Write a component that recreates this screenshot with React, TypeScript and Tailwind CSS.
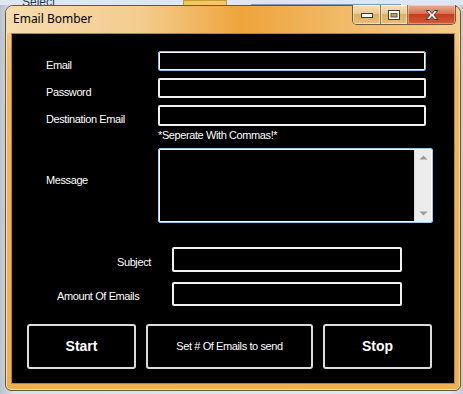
import React from "react";

const font = { fontFamily: '"Liberation Sans", Arial, sans-serif' };

const Box = ({ w, h, focus }: { w: string; h: string; focus?: boolean }) => (
  <div
    className={`${w} ${h} bg-black rounded-[2px] ${
      focus
        ? "border border-[#86b9e8] shadow-[inset_0_0_0_1px_#ffffff]"
        : "border-2 border-[#f2f2f2]"
    }`}
  />
);

const Label = ({ children, className = "" }: { children: React.ReactNode; className?: string }) => (
  <div className={`text-white text-[11px] leading-[13px] tracking-[-0.4px] whitespace-nowrap ${className}`}>
    {children}
  </div>
);

const CaptionButtons = () => (
  <div className="flex h-[20px] -mt-px mr-[4px] rounded-b-[5px] overflow-hidden border border-t-0 border-[#6e5a3c]">
    <div className="w-[28px] h-full flex items-center justify-center bg-[linear-gradient(#f8e2bd,#ecc98c_45%,#dcae62_50%,#e8c07a)] border-r border-[#8a7450] shadow-[inset_0_0_0_1px_rgba(255,255,255,0.5)]">
      <svg width="12" height="6" viewBox="0 0 12 6">
        <rect x="0.5" y="1.5" width="11" height="4" fill="#fff" stroke="#3b3b3b" />
      </svg>
    </div>
    <div className="w-[27px] h-full flex items-center justify-center bg-[linear-gradient(#f8e2bd,#ecc98c_45%,#dcae62_50%,#e8c07a)] border-r border-[#8a7450] shadow-[inset_0_0_0_1px_rgba(255,255,255,0.5)]">
      <svg width="12" height="10" viewBox="0 0 12 10">
        <rect x="0.5" y="0.5" width="11" height="9" fill="#fff" stroke="#3b3b3b" />
        <rect x="3" y="3.5" width="6" height="3.5" fill="#c79a55" stroke="#3b3b3b" strokeWidth="0.8" />
      </svg>
    </div>
    <div className="w-[47px] h-full flex items-center justify-center bg-[linear-gradient(#eab09c,#d9704f_45%,#c53d1c_50%,#d75a34)] shadow-[inset_0_0_0_1px_rgba(255,255,255,0.35)]">
      <svg width="14" height="12" viewBox="0 0 14 12">
        <path
          d="M1 1.5 L4.5 1.5 L7 4.5 L9.5 1.5 L13 1.5 L8.8 6 L13 10.5 L9.5 10.5 L7 7.5 L4.5 10.5 L1 10.5 L5.2 6 Z"
          fill="#fff"
          stroke="#3a3a3a"
          strokeWidth="1"
          strokeLinejoin="round"
        />
      </svg>
    </div>
  </div>
);

const ScrollArrow = ({ up }: { up?: boolean }) => (
  <svg width="9" height="5" viewBox="0 0 9 5">
    <path d={up ? "M0.5 4.5 L4.5 0.5 L8.5 4.5 Z" : "M0.5 0.5 L4.5 4.5 L8.5 0.5 Z"} fill="#9a9a9a" />
  </svg>
);

export default function App() {
  return (
    <div className="w-[463px] h-[394px] overflow-hidden bg-[linear-gradient(90deg,#b9c3ce,#d8e0ea_3%,#dfe7f1_97%,#c3ccd6)] flex flex-col" style={font}>
      {/* ribbon behind the window */}
      <div className="h-[5px] flex items-end bg-[#dde7f3] overflow-hidden">
        <div className="ml-[22px] text-[12px] leading-[12px] text-[#2b3b52] -mb-[3px]">Select</div>
        <div className="ml-[128px] w-[44px] h-[6px] bg-[#f3c85f] border border-[#c79a3a] -mb-px" />
        <div className="ml-[24px] w-[150px] h-[3px] border-b border-[#7b98c0]" />
      </div>

      <div className="ml-[5px] w-[456px] h-[386px] rounded-t-[8px] rounded-b-[6px] border border-[#6a5637] bg-[linear-gradient(#f4cf92,#efb75c_20%,#efb053)] flex flex-col shadow-[inset_0_0_0_1px_rgba(255,240,210,0.7)]">
        {/* title bar */}
        <div className="h-[27px] flex justify-between rounded-t-[7px] bg-[linear-gradient(90deg,#f7dcae,#f3cc8e_30%,#eea43a_52%,#f0b864_72%,#f5cc8c)]">
          <div
            className="pl-[7px] pt-[5px] text-[12px] leading-[16px] text-black"
            style={{ fontFamily: '"Noto Sans", "Open Sans", sans-serif' }}
          >
            Email Bomber
          </div>
          <CaptionButtons />
        </div>

        {/* client area */}
        <div className="mx-[5px] h-[351px] bg-black border border-[#b8833a] flex flex-col pt-[17px]">
          <div className="flex pl-[34px] h-[20px]">
            <Label className="w-[112px] pt-[8px]">Email</Label>
            <Box w="w-[268px]" h="h-[20px]" focus />
          </div>
          <div className="flex pl-[34px] h-[20px] mt-[7px]">
            <Label className="w-[112px] pt-[8px]">Password</Label>
            <Box w="w-[268px]" h="h-[20px]" />
          </div>
          <div className="flex pl-[34px] h-[21px] mt-[7px]">
            <Label className="w-[112px] pt-[8px]">Destination Email</Label>
            <Box w="w-[268px]" h="h-[21px]" />
          </div>
          <Label className="pl-[146px] mt-[3px]">*Seperate With Commas!*</Label>
          <div className="flex pl-[34px] mt-[6px]">
            <Label className="w-[112px] pt-[26px]">Message</Label>
            <div className="w-[275px] h-[75px] bg-black border border-[#9cc6ea] shadow-[inset_0_0_0_1px_#ffffff] p-px flex justify-end rounded-[2px]">
              <div className="w-[17px] h-full bg-[#ececec] border-l border-[#dcdcdc] flex flex-col items-center justify-between py-[5px]">
                <ScrollArrow up />
                <ScrollArrow />
              </div>
            </div>
          </div>

          <div className="flex mt-[24px]">
            <Label className="w-[160px] pl-[105px] pt-[9px]">Subject</Label>
            <Box w="w-[230px]" h="h-[25px]" />
          </div>
          <div className="flex mt-[10px]">
            <Label className="w-[160px] pl-[45px] pt-[8px]">Amount Of Emails</Label>
            <Box w="w-[230px]" h="h-[24px]" />
          </div>

          <div className="flex gap-[10px] pl-[15px] mt-[18px]">
            <div className="w-[109px] h-[45px] border-2 border-[#dcdcdc] rounded-[3px] flex items-center justify-center text-white text-[14px] font-bold">
              Start
            </div>
            <div className="w-[167px] h-[45px] border-2 border-[#dcdcdc] rounded-[3px] flex items-center justify-center text-white text-[11px] tracking-[-0.4px]">
              Set # Of Emails to send
            </div>
            <div className="w-[109px] h-[45px] border-2 border-[#dcdcdc] rounded-[3px] flex items-center justify-center text-white text-[14px] font-bold">
              Stop
            </div>
          </div>
        </div>
      </div>
    </div>
  );
}
